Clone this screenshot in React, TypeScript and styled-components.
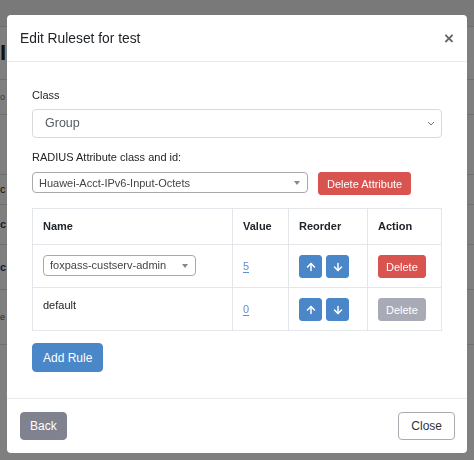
import { ArrowDown, ArrowUp } from "lucide-react";
import styled, { createGlobalStyle } from "styled-components";

const GlobalStyle = createGlobalStyle`
  html, body {
    margin: 0;
    padding: 0;
    background: #ffffff;
    font-family: "Liberation Sans", Arial, sans-serif;
    color: #212529;
  }
  * {
    box-sizing: border-box;
  }
`;

// page behind the dialog
const Page = styled.div`
  width: 474px;
  height: 460px;
  overflow: hidden;
`;

const TopBar = styled.div`
  height: 27px;
  background: #f2f2f2;
  border-bottom: 1px solid #dcdcdc;
`;

const PageRow = styled.div<{ $h: number }>`
  height: ${(p) => p.$h}px;
  border-bottom: 1px solid #dedede;
  display: flex;
  align-items: center;
`;

const PageText = styled.span<{ $size: number; $color: string; $bold?: boolean }>`
  font-size: ${(p) => p.$size}px;
  line-height: 1;
  color: ${(p) => p.$color};
  font-weight: ${(p) => (p.$bold ? 700 : 400)};
`;

// dialog
const Overlay = styled.div`
  position: fixed;
  inset: 0;
  background: rgba(0, 0, 0, 0.5);
  padding: 15px 0 0 7px;
`;

const Modal = styled.div`
  width: 460px;
  height: 438px;
  background: #ffffff;
  border-radius: 4px;
  display: flex;
  flex-direction: column;
  overflow: hidden;
`;

const Header = styled.div`
  flex-shrink: 0;
  height: 47px;
  border-bottom: 1px solid #e9ecef;
  display: flex;
  align-items: center;
  justify-content: space-between;
  padding: 1px 13px 0 13px;
`;

const Title = styled.h5`
  margin: 0;
  font-size: 13.8px;
  font-weight: 400;
  line-height: 20px;
  color: #212529;
`;

const CloseX = styled.button`
  border: 0;
  background: none;
  padding: 0;
  font-family: "Liberation Sans", Arial, sans-serif;
  font-size: 17px;
  font-weight: 700;
  line-height: 1;
  color: #666666;
`;

const Body = styled.div`
  flex: 1;
  min-height: 0;
  overflow: hidden;
  padding: 25px;
`;

const Label = styled.div<{ $gap: number }>`
  font-size: 11px;
  line-height: 16.5px;
  margin-bottom: ${(p) => p.$gap}px;
`;

const BigSelect = styled.div`
  height: 29px;
  border: 1px solid #d7dadd;
  border-radius: 4px;
  display: flex;
  align-items: center;
  justify-content: space-between;
  padding: 0 6px 0 12px;
  font-size: 12.5px;
  color: #555c63;
  margin-bottom: 11px;
`;

const SmallSelect = styled.div<{ $w: number }>`
  width: ${(p) => p.$w}px;
  height: 21px;
  border: 1px solid #aaaaaa;
  border-radius: 4px;
  display: flex;
  align-items: center;
  justify-content: space-between;
  padding: 0 7px 0 6px;
  font-size: 11px;
  color: #444444;
  white-space: nowrap;
`;

const Caret = styled.span`
  width: 0;
  height: 0;
  border-left: 3.5px solid transparent;
  border-right: 3.5px solid transparent;
  border-top: 4px solid #888888;
`;

const AttrRow = styled.div`
  display: flex;
  align-items: flex-start;
  gap: 10px;
  margin-top: 1px;
  margin-bottom: 13px;
`;

const Btn = styled.button<{ $tone: "blue" | "red" | "muted" | "gray" | "light"; $h: number; $size: number; $px: number }>`
  height: ${(p) => p.$h}px;
  padding: 0 ${(p) => p.$px}px;
  font-family: "Liberation Sans", Arial, sans-serif;
  font-size: ${(p) => p.$size}px;
  border-radius: ${(p) => (p.$h > 25 ? 4 : 3)}px;
  border: 1px solid
    ${(p) =>
      ({ blue: "#4a87c8", red: "#d9534f", muted: "#a8aab5", gray: "#80838f", light: "#a8acb0" })[p.$tone]};
  background: ${(p) =>
    ({ blue: "#4a87c8", red: "#d9534f", muted: "#a8aab5", gray: "#80838f", light: "#ffffff" })[p.$tone]};
  color: ${(p) => (p.$tone === "light" ? "#333333" : "#ffffff")};
  display: inline-flex;
  align-items: center;
  justify-content: center;
  white-space: nowrap;
`;

const Table = styled.table`
  width: 410px;
  border-collapse: collapse;
  font-size: 11px;
  margin-bottom: 12px;

  th,
  td {
    border: 1px solid #e3e6ea;
    padding: 10px 10px 9px;
    text-align: left;
    vertical-align: top;
    line-height: 15px;
  }
  th {
    font-weight: 700;
    padding: 10px 10px 10px;
  }
`;

const Editable = styled.a`
  color: #5b8fcf;
  text-decoration: none;
  border-bottom: 1px dashed #5b8fcf;
  display: inline-block;
  line-height: 12px;
  margin-top: 5px;
`;

const ReorderGroup = styled.div`
  display: flex;
  gap: 4px;
`;

const Footer = styled.div`
  flex-shrink: 0;
  border-top: 1px solid #e9ecef;
  display: flex;
  justify-content: space-between;
  align-items: center;
  padding: 13px 12px 13px 13px;
`;

const Chevron = () => (
  <svg width="8" height="5" viewBox="0 0 8 5">
    <path d="M1 1l3 3 3-3" fill="none" stroke="#777" strokeWidth="1" />
  </svg>
);

interface IRule {
  name: string;
  value: number;
  select: boolean;
  canDelete: boolean;
}

const rules: IRule[] = [
  { name: "foxpass-custserv-admin", value: 5, select: true, canDelete: true },
  { name: "default", value: 0, select: false, canDelete: false },
];

function App() {
  return (
    <>
      <GlobalStyle />
      <Page>
        <TopBar />
        <PageRow $h={53}>
          <PageText $size={22} $color="#222" $bold>
            I
          </PageText>
        </PageRow>
        <PageRow $h={35}>
          <PageText $size={9} $color="#777">
            o
          </PageText>
        </PageRow>
        <PageRow $h={60} />
        <PageRow $h={30}>
          <PageText $size={11} $color="#222">
            c
          </PageText>
        </PageRow>
        <PageRow $h={40}>
          <PageText $size={11} $color="#1c3f7a" $bold>
            c
          </PageText>
        </PageRow>
        <PageRow $h={45}>
          <PageText $size={11} $color="#1c3f7a" $bold>
            c
          </PageText>
        </PageRow>
        <PageRow $h={55}>
          <PageText $size={9} $color="#555">
            e
          </PageText>
        </PageRow>
      </Page>

      <Overlay>
        <Modal>
          <Header>
            <Title>Edit Ruleset for test</Title>
            <CloseX>×</CloseX>
          </Header>
          <Body>
            <Label $gap={5}>Class</Label>
            <BigSelect>
              Group
              <Chevron />
            </BigSelect>
            <Label $gap={7}>RADIUS Attribute class and id:</Label>
            <AttrRow>
              <SmallSelect $w={276}>
                Huawei-Acct-IPv6-Input-Octets
                <Caret />
              </SmallSelect>
              <Btn $tone="red" $h={23} $size={11} $px={8}>
                Delete Attribute
              </Btn>
            </AttrRow>
            <Table>
              <thead>
                <tr>
                  <th style={{ width: 200 }}>Name</th>
                  <th style={{ width: 56 }}>Value</th>
                  <th style={{ width: 79 }}>Reorder</th>
                  <th>Action</th>
                </tr>
              </thead>
              <tbody>
                {rules.map((rule) => (
                  <tr key={rule.name}>
                    <td>
                      {rule.select ? (
                        <SmallSelect $w={153}>
                          {rule.name}
                          <Caret />
                        </SmallSelect>
                      ) : (
                        <span>{rule.name}</span>
                      )}
                    </td>
                    <td>
                      <Editable>{rule.value}</Editable>
                    </td>
                    <td>
                      <ReorderGroup>
                        <Btn $tone="blue" $h={23} $size={11} $px={0} style={{ width: 23 }}>
                          <ArrowUp size={12} strokeWidth={3} />
                        </Btn>
                        <Btn $tone="blue" $h={23} $size={11} $px={0} style={{ width: 23 }}>
                          <ArrowDown size={12} strokeWidth={3} />
                        </Btn>
                      </ReorderGroup>
                    </td>
                    <td>
                      <Btn $tone={rule.canDelete ? "red" : "muted"} $h={23} $size={11} $px={7}>
                        Delete
                      </Btn>
                    </td>
                  </tr>
                ))}
              </tbody>
            </Table>
            <Btn $tone="blue" $h={29} $size={12} $px={10}>
              Add Rule
            </Btn>
          </Body>
          <Footer>
            <Btn $tone="gray" $h={28} $size={12} $px={9}>
              Back
            </Btn>
            <Btn $tone="light" $h={28} $size={12} $px={12}>
              Close
            </Btn>
          </Footer>
        </Modal>
      </Overlay>
    </>
  );
}

export default App;
